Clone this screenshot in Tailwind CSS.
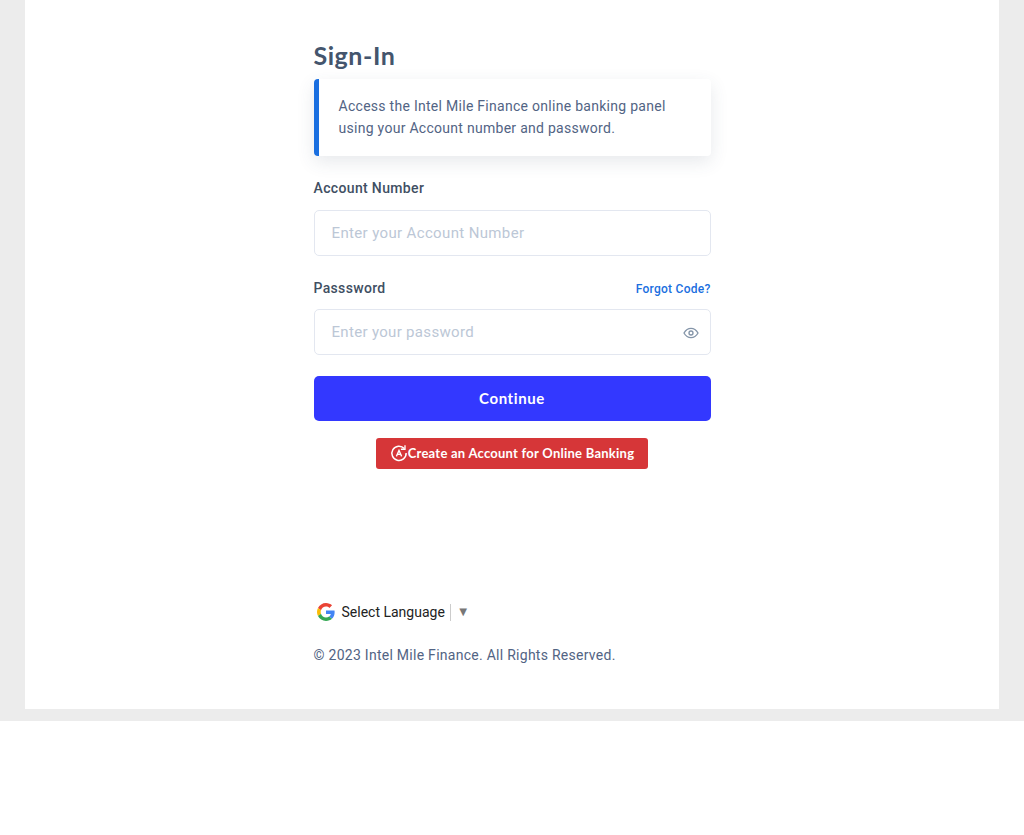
<!DOCTYPE html>
<html lang="en">
<head>
<meta charset="UTF-8">
<title>Sign-In</title>
<script src="https://cdn.jsdelivr.net/npm/@tailwindcss/browser@4"></script>
</head>
<body class="bg-white font-['Roboto',sans-serif] text-[#526484]">
<div class="h-[721px] bg-[#ececec] px-[25px] pb-3">
  <div class="flex h-full justify-center bg-white">
    <div class="flex w-[397px] flex-col pt-[40px]">
      <h1 class="font-['Lato',sans-serif] text-[25px] leading-[30px] font-bold tracking-[0.55px] text-[#44556d]">Sign-In</h1>
      <div class="mt-[9px] h-[77px] rounded-[4px] border-l-[5px] border-[#1a6fe0] bg-white pt-4 pl-5 text-sm leading-[22px] tracking-[0.28px] shadow-[0_6px_18px_rgba(54,74,99,0.12)]">
        <p>Access the Intel Mile Finance online banking panel<br>using your Account number and password.</p>
      </div>
      <label class="mt-[22px] text-sm leading-5 font-medium tracking-[0.35px] text-[#3f4f63]">Account Number</label>
      <input type="text" placeholder="Enter your Account Number" class="mt-[12px] h-[46px] rounded-[5px] border border-[#e3e7f0] px-[17px] text-[15px] tracking-[0.36px] placeholder:text-[#bcc7d6]">
      <div class="mt-[22px] flex items-center justify-between">
        <label class="text-sm leading-5 font-medium tracking-[0.33px] text-[#3f4f63]">Passsword</label>
        <a href="#" class="mt-px text-xs font-medium tracking-[0.25px] text-[#1a6fe0]">Forgot Code?</a>
      </div>
      <div class="relative mt-[11px]">
        <input type="text" placeholder="Enter your password" class="h-[46px] w-full rounded-[5px] border border-[#e3e7f0] px-[17px] text-[15px] tracking-[0.32px] placeholder:text-[#bcc7d6]">
        <svg class="absolute top-[16px] right-[12px] h-4 w-4 text-[#8394a8]" viewBox="0 0 24 24" fill="none" stroke="currentColor" stroke-width="2"><path d="M1.500 12S5.500 5 12 5s10.500 7 10.500 7-4 7-10.500 7S1.500 12 1.500 12z"/><circle cx="12" cy="12" r="3"/></svg>
      </div>
      <button class="mt-[21px] h-[45px] rounded-[5px] bg-[#3338ff] font-['Lato',sans-serif] text-[15px] font-bold tracking-[0.6px] text-white">Continue</button>
      <div class="mt-[17px] flex justify-center">
        <a href="#" class="flex h-[31px] w-[272px] items-center justify-center rounded-[3px] bg-[#d63638] font-['Lato',sans-serif] text-[13px] font-bold tracking-[0.25px] text-white">
          <svg class="mb-px h-[18px] w-[18px]" viewBox="0 0 24 24" fill="none" stroke="currentColor" stroke-width="2"><path d="M19 6A9.500 9.500 0 1 0 21.500 12"/><path d="M20 1.500v5.500h-5.500" stroke-width="1.800"/><path d="M8.500 16.500L12 8.500l3.500 8M9.800 13.800h4.400" stroke-width="1.800"/></svg>
          Create an Account for Online Banking
        </a>
      </div>
      <div class="mt-[133px] flex items-center pl-[3px] text-sm leading-5 text-[#222]">
        <svg class="h-[18px] w-[18px]" viewBox="0 0 48 48"><path fill="#EA4335" d="M24 9.500c3.500 0 6.700 1.200 9.200 3.600l6.900-6.900C35.900 2.400 30.500 0 24 0 14.600 0 6.500 5.400 2.600 13.200l8 6.200C12.500 13.700 17.800 9.500 24 9.500z"/><path fill="#4285F4" d="M47 24.500c0-1.600-.1-3.100-.4-4.500H24v9h12.900c-.6 3-2.200 5.500-4.700 7.200l7.700 6C44.400 38.100 47 31.900 47 24.500z"/><path fill="#FBBC05" d="M10.600 28.600c-.5-1.400-.8-3-.8-4.600s.3-3.200.8-4.600l-8-6.200C.9 16.500 0 20.100 0 24s.9 7.500 2.600 10.800l8-6.200z"/><path fill="#34A853" d="M24 48c6.500 0 11.900-2.100 15.900-5.800l-7.700-6c-2.200 1.400-4.900 2.300-8.200 2.300-6.200 0-11.500-4.200-13.400-9.900l-8 6.200C6.500 42.600 14.600 48 24 48z"/></svg>
        <span class="ml-[7px]">Select Language</span>
        <span class="ml-[5px] h-[17px] border-l border-[#ccc]"></span>
        <span class="ml-[6px] text-[13px] text-[#777]">▼</span>
      </div>
      <p class="mt-[23px] text-sm leading-5 tracking-[0.27px]">© 2023 Intel Mile Finance. All Rights Reserved.</p>
    </div>
  </div>
</div>
</body>
</html>
